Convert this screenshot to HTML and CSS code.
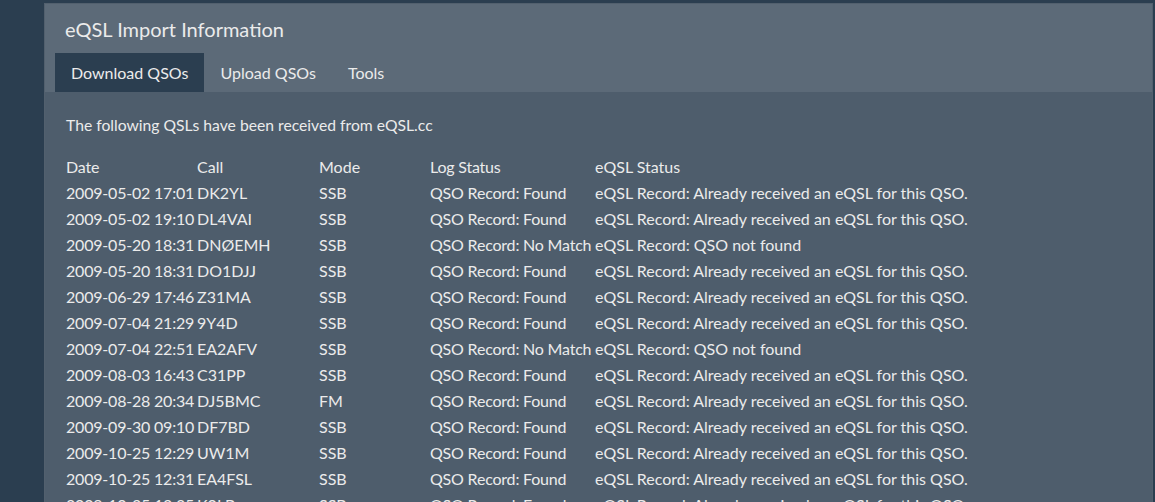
FILE: index.html
```html
<!DOCTYPE html>
<html lang="en">
<head>
    <meta charset="UTF-8">
    <title>eQSL Import</title>
    <link rel="stylesheet" href="styles.css">
</head>
<body>
    <div class="page">
        <div class="card">
            <div class="card-header">
                <h5 class="card-title">eQSL Import Information</h5>
                <ul class="tabs">
                    <li class="tab active">Download QSOs</li>
                    <li class="tab">Upload QSOs</li>
                    <li class="tab">Tools</li>
                </ul>
            </div>
            <div class="card-body">
                <p class="intro">The following QSLs have been received from eQSL.cc</p>
                <table class="qsl-table">
                    <colgroup>
                        <col class="col-date">
                        <col class="col-call">
                        <col class="col-mode">
                        <col class="col-log">
                        <col class="col-eqsl">
                    </colgroup>
                    <tr><td>Date</td><td>Call</td><td>Mode</td><td>Log Status</td><td>eQSL Status</td></tr>
                    <tr><td>2009-05-02 17:01</td><td>DK2YL</td><td>SSB</td><td>QSO Record: Found</td><td>eQSL Record: Already received an eQSL for this QSO.</td></tr>
                    <tr><td>2009-05-02 19:10</td><td>DL4VAI</td><td>SSB</td><td>QSO Record: Found</td><td>eQSL Record: Already received an eQSL for this QSO.</td></tr>
                    <tr><td>2009-05-20 18:31</td><td>DNØEMH</td><td>SSB</td><td>QSO Record: No Match</td><td>eQSL Record: QSO not found</td></tr>
                    <tr><td>2009-05-20 18:31</td><td>DO1DJJ</td><td>SSB</td><td>QSO Record: Found</td><td>eQSL Record: Already received an eQSL for this QSO.</td></tr>
                    <tr><td>2009-06-29 17:46</td><td>Z31MA</td><td>SSB</td><td>QSO Record: Found</td><td>eQSL Record: Already received an eQSL for this QSO.</td></tr>
                    <tr><td>2009-07-04 21:29</td><td>9Y4D</td><td>SSB</td><td>QSO Record: Found</td><td>eQSL Record: Already received an eQSL for this QSO.</td></tr>
                    <tr><td>2009-07-04 22:51</td><td>EA2AFV</td><td>SSB</td><td>QSO Record: No Match</td><td>eQSL Record: QSO not found</td></tr>
                    <tr><td>2009-08-03 16:43</td><td>C31PP</td><td>SSB</td><td>QSO Record: Found</td><td>eQSL Record: Already received an eQSL for this QSO.</td></tr>
                    <tr><td>2009-08-28 20:34</td><td>DJ5BMC</td><td>FM</td><td>QSO Record: Found</td><td>eQSL Record: Already received an eQSL for this QSO.</td></tr>
                    <tr><td>2009-09-30 09:10</td><td>DF7BD</td><td>SSB</td><td>QSO Record: Found</td><td>eQSL Record: Already received an eQSL for this QSO.</td></tr>
                    <tr><td>2009-10-25 12:29</td><td>UW1M</td><td>SSB</td><td>QSO Record: Found</td><td>eQSL Record: Already received an eQSL for this QSO.</td></tr>
                    <tr><td>2009-10-25 12:31</td><td>EA4FSL</td><td>SSB</td><td>QSO Record: Found</td><td>eQSL Record: Already received an eQSL for this QSO.</td></tr>
                    <tr><td>2009-10-25 12:35</td><td>K0LB</td><td>SSB</td><td>QSO Record: Found</td><td>eQSL Record: Already received an eQSL for this QSO.</td></tr>
                </table>
            </div>
        </div>
    </div>
</body>
</html>
```

FILE: styles.css
```css
html, body {
    margin: 0;
    height: 100%;
    overflow: hidden;
}
body {
    font-family: Lato, "Open Sans", sans-serif;
    font-size: 16px;
    line-height: 1.5;
    background-color: #2b3e50;
    color: #ebebeb;
}
.page {
    padding: 3px 2px 0 44px;
}
.card {
    background-color: #4e5d6c;
    border: 1px solid #52606e;
    border-bottom: none;
}
.card-header {
    background-color: #5c6a78;
    padding: 10px 20px 0 20px;
}
.card-title {
    margin: 0 0 9px 0;
    font-size: 20px;
    font-weight: 400;
    line-height: 30px;
}
.tabs {
    list-style: none;
    margin: 0 -10px;
    padding: 0;
    display: flex;
}
.tab {
    padding: 8px 16px;
    line-height: 23px;
}
.tab.active {
    background-color: #2b3e50;
}
.card-body {
    padding: 22px 21px 0 21px;
}
.intro {
    margin: 0 0 16px 0;
    font-size: 15.7px;
}
.qsl-table {
    border-collapse: collapse;
    table-layout: fixed;
    width: 980px;
}
.qsl-table td {
    padding: 0;
    height: 26px;
    white-space: nowrap;
    vertical-align: middle;
}
.qsl-table td:first-child {
    letter-spacing: -0.2px;
}
.qsl-table td:nth-child(4) {
    letter-spacing: -0.2px;
}
.col-date {
    width: 131px;
}
.col-call {
    width: 122px;
}
.col-mode {
    width: 111px;
}
.col-log {
    width: 165px;
}
.col-eqsl {
    width: 451px;
}
```
